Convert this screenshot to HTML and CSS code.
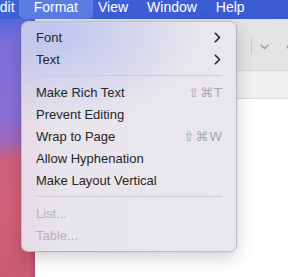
FILE: index.html
```html
<!DOCTYPE html>
<html lang="en">
<head>
    <meta charset="UTF-8">
    <title>Format menu</title>
    <link rel="stylesheet" href="styles.css">
</head>
<body>
<div class="menubar">
    <span class="bar-item edit">Edit</span>
    <span class="bar-item active">Format</span>
    <span class="bar-item">View</span>
    <span class="bar-item">Window</span>
    <span class="bar-item">Help</span>
</div>

<div class="screen">
    <div class="wallpaper"></div>
    <div class="window">
        <div class="toolbar">
            <span class="tool-sep"></span>
            <svg class="tool-chevron" width="9" height="6" viewBox="0 0 9 6">
                <path d="M1 1.2 L4.5 4.5 L8 1.2" fill="none" stroke="#9c9c9c" stroke-width="1.4" stroke-linecap="round" stroke-linejoin="round"/>
            </svg>
            <svg class="tool-icon" width="8" height="8" viewBox="0 0 8 8">
                <path d="M4 1 L1.2 4 L4 7" fill="none" stroke="#a0a0a0" stroke-width="1.4" stroke-linecap="round"/>
            </svg>
        </div>
        <div class="format-bar"></div>
        <div class="document"></div>
    </div>
</div>

<div class="menu">
    <div class="menu-item">
        <span>Font</span>
        <svg class="submenu" width="7" height="11" viewBox="0 0 7 11">
            <path d="M1.3 1.3 L5.5 5.5 L1.3 9.7" fill="none" stroke="#232323" stroke-width="1.6" stroke-linecap="round" stroke-linejoin="round"/>
        </svg>
    </div>
    <div class="menu-item">
        <span>Text</span>
        <svg class="submenu" width="7" height="11" viewBox="0 0 7 11">
            <path d="M1.3 1.3 L5.5 5.5 L1.3 9.7" fill="none" stroke="#232323" stroke-width="1.6" stroke-linecap="round" stroke-linejoin="round"/>
        </svg>
    </div>
    <div class="menu-sep"></div>
    <div class="menu-item">
        <span>Make Rich Text</span>
        <span class="shortcut">⇧⌘T</span>
    </div>
    <div class="menu-item"><span>Prevent Editing</span></div>
    <div class="menu-item">
        <span>Wrap to Page</span>
        <span class="shortcut">⇧⌘W</span>
    </div>
    <div class="menu-item"><span>Allow Hyphenation</span></div>
    <div class="menu-item"><span>Make Layout Vertical</span></div>
    <div class="menu-sep"></div>
    <div class="menu-item disabled"><span>List...</span></div>
    <div class="menu-item disabled"><span>Table...</span></div>
</div>
</body>
</html>
```

FILE: styles.css
```css
body {
    margin: 0;
    width: 288px;
    height: 277px;
    overflow: hidden;
    font-family: 'Liberation Sans', Arial, sans-serif;
    background: #fff;
}

.menubar {
    height: 19px;
    display: flex;
    align-items: flex-start;
    background: linear-gradient(to right, #3f62d9, #3a5ad2);
    color: #fff;
    font-size: 14px;
    white-space: nowrap;
}

.bar-item {
    height: 19px;
    line-height: 14px;
    padding: 0 9.5px;
}

.bar-item.edit {
    margin-left: -19px;
}

.bar-item.active {
    padding: 0 15px;
    margin: 0 -4.5px 0 -5.5px;
    background-color: #5a7de4;
    border-radius: 0 0 5px 5px;
}

.screen {
    display: flex;
    height: 258px;
}

.wallpaper {
    width: 35px;
    background:
        linear-gradient(to right, rgba(0, 0, 0, 0) 85%, rgba(60, 20, 60, 0.18)),
        linear-gradient(168deg, #4f68dc 0px, #7c6fdc 25px, #8a6fd6 100px, #a068b8 122px, #cf607e 140px, #d4607a 190px, #c95a72 258px);
}

.window {
    flex: 1;
    display: flex;
    flex-direction: column;
}

.toolbar {
    height: 52px;
    background-color: #e4e4e4;
    border-bottom: 1px solid #d6d6d6;
    box-sizing: border-box;
    display: flex;
    align-items: center;
    justify-content: flex-end;
    padding-top: 2px;
    overflow: hidden;
}

.tool-sep {
    width: 1px;
    height: 17px;
    background-color: #c9c9c9;
}

.tool-chevron {
    margin-left: 8px;
    margin-top: 2px;
}

.tool-icon {
    margin-left: 17px;
    margin-right: -6px;
    margin-top: 2px;
}

.format-bar {
    height: 28px;
    background-color: #f0eff2;
    border-bottom: 1px solid #dedede;
    box-sizing: border-box;
}

.document {
    flex: 1;
    background-color: #fff;
}

.menu {
    position: absolute;
    left: 21px;
    top: 21px;
    width: 216px;
    box-sizing: border-box;
    padding: 4px 0 5px;
    border-radius: 7px;
    border: 1px solid rgba(150, 145, 160, 0.45);
    background:
        radial-gradient(ellipse 150px 90px at 30px 10px, rgba(175, 185, 240, 0.75), rgba(175, 185, 240, 0) 100%),
        linear-gradient(to right, #e6dae6, #e8e5ec 40px, #e9e7ec);
    box-shadow: 0 6px 18px rgba(0, 0, 0, 0.18), 0 0 2px rgba(0, 0, 0, 0.1);
    font-size: 13px;
    color: #262626;
}

.menu-item {
    height: 22px;
    display: flex;
    align-items: center;
    justify-content: space-between;
    padding: 0 14px;
}

.menu-item.disabled {
    color: #b5b2b9;
}

.submenu {
    margin-right: 1px;
}

.shortcut {
    font-family: 'DejaVu Sans', sans-serif;
    font-size: 13px;
    letter-spacing: 1px;
    color: #a9a7ad;
    margin-right: -1px;
}

.menu-sep {
    height: 1px;
    margin: 5px 14px;
    background-color: #cfccd2;
}
```
